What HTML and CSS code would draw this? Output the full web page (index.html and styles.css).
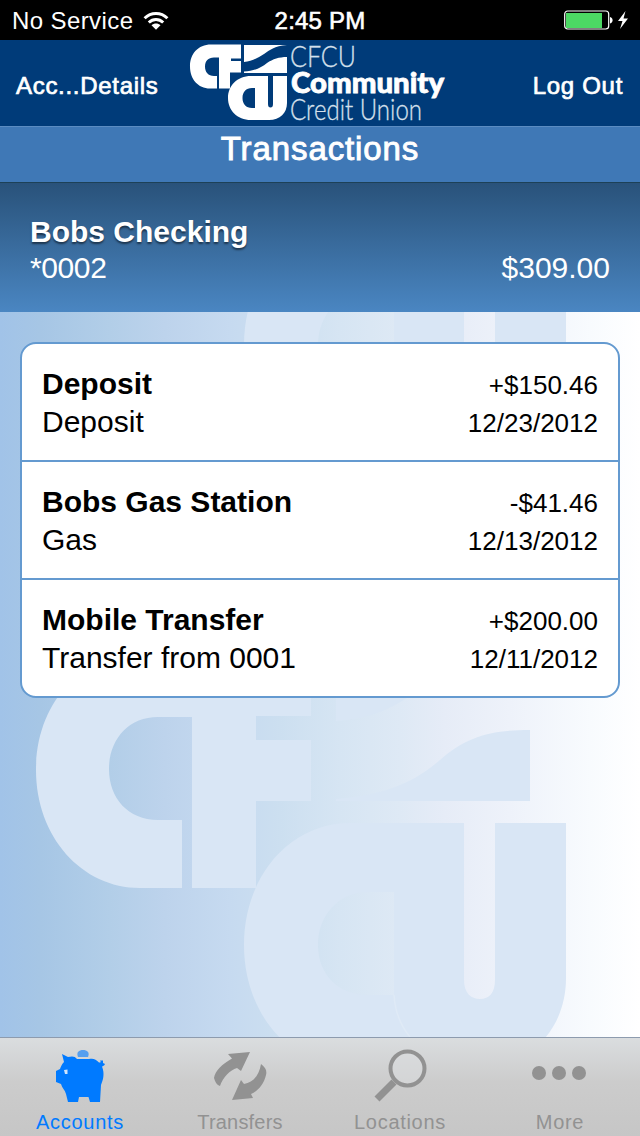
FILE: index.html
```html
<!DOCTYPE html>
<html lang="en">
<head>
    <meta charset="UTF-8">
    <meta name="viewport" content="width=device-width, initial-scale=1.0">
    <title>Transactions</title>
    <link rel="stylesheet" href="styles.css">
</head>
<body>

<!-- CFCU mark used by the page background -->
<svg class="defs" width="0" height="0">
    <symbol id="mark" viewBox="36 652 531 415" preserveAspectRatio="none">
        <path d="M311 652H144C82 652 36 703 36 770S82 888 140 888H182V820H158C128 820 109 798 109 769S128 717 158 717H192V888H256V801H311V740H256V716H311Z"/>
        <path d="M336 652H530C465 652 440 675 410 696C388 711 364 720 336 721Z"/>
        <path d="M336 801V799C382 795 411 785 440 760C467 736 492 730 530 730V801Z"/>
        <path d="M464 823H350C290 823 244 876 244 945S290 1067 350 1067H480C529 1067 566 1030 566 978V823H495V980C495 993 489 999 480 999S464 993 464 980ZM394 892V995H368C338 995 318 974 318 945S338 892 368 892Z" fill-rule="evenodd"/>
    </symbol>
</svg>

<div class="status-bar">
    <div class="carrier">
        <span class="carrier-name">No Service</span>
        <svg class="wifi" width="26" height="20" viewBox="0 0 26 20">
            <path d="M1.6 7.2C8 .9 18 .9 24.4 7.2" fill="none" stroke="#fff" stroke-width="3"/>
            <path d="M5.8 11.5C10 7.5 16 7.5 20.2 11.5" fill="none" stroke="#fff" stroke-width="3"/>
            <path d="M8.5 14.3C11 12 15 12 17.5 14.3L13 18.8Z" fill="#fff"/>
        </svg>
    </div>
    <span class="clock">2:45 PM</span>
    <svg class="battery" width="66" height="20" viewBox="0 0 66 20">
        <rect x=".7" y="1" width="44" height="18" rx="3" fill="none" stroke="#fff" stroke-width="1.2"/>
        <rect x="2" y="3" width="36" height="15" fill="#4cd964"/>
        <path d="M46 7C49.5 7.5 49.5 13 46 13.5Z" fill="#fff"/>
        <path d="M61.5 1L54 11H58.5L56 19L64 8.500H59.5Z" fill="#fff"/>
    </svg>
</div>

<div class="header">
    <a class="header-link" id="back">Acc...Details</a>
    <svg class="logo" width="256" height="82" viewBox="0 0 256 82">
        <g fill="#fff">
            <path d="M52 2.500H22C9 2.500 1 12 1 24.500S9 46.500 21 46.500H28V34H25C19 34 16 30 16 24.500S19 15.500 25 15.500H30V46.500H41V30.500H52V19H42V16.500H52Z"/>
            <path d="M55 3H98C85 4 81 8 75 12C69 16 63 19 55 20Z"/>
            <path d="M55 31V29.500C65 29 72 26 78 21C84 17 90 15 98 15V31Z"/>
            <path d="M79 34H62C48 34 39 44 39 56S48 78 62 78H80C91 78 98 71 98 61V34H84V62Q84 65.500 81.500 65.500T79 62ZM66 46V66H63C57 66 53.500 62 53.500 56S57 46 63 46Z" fill-rule="evenodd"/>
        </g>
        <text class="logo-light" x="101" y="25" textLength="66" lengthAdjust="spacingAndGlyphs">CFCU</text>
        <text class="logo-bold" x="102" y="51" textLength="153" lengthAdjust="spacingAndGlyphs">Community</text>
        <text class="logo-light" x="101" y="77.500" textLength="132" lengthAdjust="spacingAndGlyphs">Credit Union</text>
    </svg>
    <a class="header-link" id="logout">Log Out</a>
</div>

<div class="page-title"><span>Transactions</span></div>

<div class="account">
    <div class="account-name"><span>Bobs Checking</span></div>
    <div class="account-row">
        <span class="account-number">*0002</span>
        <span>$309.00</span>
    </div>
</div>

<div class="main-content">
    <svg class="watermark" width="640" height="725" viewBox="0 312 640 725">
        <use href="#mark" x="36" y="52" width="531" height="415"/>
        <use href="#mark" x="36" y="652" width="531" height="415"/>
        <path d="M394 995C395 1012 401 1026 410 1037" fill="none" stroke="#dfeaf6" stroke-width="1.5"/>
    </svg>
    <ul class="transaction-list">
        <li>
            <div class="line"><b>Deposit</b><span class="amount">+$150.46</span></div>
            <div class="line"><span>Deposit</span><span class="amount">12/23/2012</span></div>
        </li>
        <li>
            <div class="line"><b>Bobs Gas Station</b><span class="amount">-$41.46</span></div>
            <div class="line"><span>Gas</span><span class="amount">12/13/2012</span></div>
        </li>
        <li>
            <div class="line"><b>Mobile Transfer</b><span class="amount">+$200.00</span></div>
            <div class="line"><span>Transfer from 0001</span><span class="amount">12/11/2012</span></div>
        </li>
    </ul>
</div>

<div class="tab-bar">
    <a class="tab active">
        <svg width="60" height="60" viewBox="0 0 60 60">
            <path d="M28 13C26 8 29 6 33 6S40 8 38 13Z" opacity=".6"/>
            <path d="M12 10L18 13C22 12 25 12 27 15H39C43 14 46 15 49 18.500C51 19 51 17.500 50 16.500L53 16.500V19L55 20C54 22 53 22 52 22.500C55 30 53 36 51 41L50 58H40L38.500 53H29L28 58H18L16 50C15 46 12 44 11 40L6 38V27L10 25C11 22 12 20 14 18Z"/>
            <path d="M14 26L17.500 25.500V30H15Z" fill="#d0e4fb"/>
        </svg>
        <span class="tab-label">Accounts</span>
    </a>
    <a class="tab">
        <svg width="60" height="60" viewBox="0 0 60 60">
            <path d="M40 8L18 10L22 14.500C12 20 5 27 4 34C5 38 7 41 10 42C13 33 20 26 27 24L31 27Z"/>
            <path d="M51 20C56 24 57 27 56 31C54 40 48 47 41 50L43 54L22 56L31 36L34 40C43 38 49 32 51 20Z"/>
        </svg>
        <span class="tab-label narrow">Transfers</span>
    </a>
    <a class="tab">
        <svg width="60" height="60" viewBox="0 0 60 60">
            <circle cx="37.500" cy="24.500" r="17" fill="#dcdddf" fill-opacity=".5" stroke="#929292" stroke-width="4"/>
            <path d="M24 38L7 55" stroke="#929292" stroke-width="7"/>
        </svg>
        <span class="tab-label">Locations</span>
    </a>
    <a class="tab">
        <svg width="60" height="60" viewBox="0 0 60 60">
            <circle cx="9" cy="29" r="7"/>
            <circle cx="29" cy="29" r="7"/>
            <circle cx="49" cy="29" r="7"/>
        </svg>
        <span class="tab-label">More</span>
    </a>
</div>

</body>
</html>
```
FILE: styles.css
```css
body {
    margin: 0;
    width: 640px;
    height: 1136px;
    overflow: hidden;
    display: flex;
    flex-direction: column;
    font-family: "Liberation Sans", Arial, sans-serif;
    color: #000;
}
.defs {
    position: absolute;
}
.status-bar {
    height: 40px;
    background-color: #000;
    color: #fff;
    font-size: 24px;
    display: grid;
    grid-template-columns: 1fr auto 1fr;
    align-items: center;
    padding: 0 10px 0 12px;
}
.carrier {
    display: flex;
    align-items: center;
    gap: 10px;
    padding-top: 1px;
}
.carrier-name {
    letter-spacing: 0.4px;
}
.clock {
    padding-top: 2px;
    margin-left: -2px;
    letter-spacing: 0.2px;
    -webkit-text-stroke: 0.6px #fff;
}
.battery {
    justify-self: end;
}
.header {
    height: 86px;
    background-color: #003b79;
    color: #fff;
    display: grid;
    grid-template-columns: 173px 256px 1fr;
    align-items: center;
    padding: 0 18px 0 16px;
}
.header-link {
    font-size: 24px;
    padding-top: 6px;
    letter-spacing: 0.7px;
    -webkit-text-stroke: 0.7px #fff;
}
#logout {
    text-align: right;
    margin-right: -1px;
}
.logo {
    overflow: visible;
}
.logo-light {
    font-family: Lato, sans-serif;
    font-weight: 300;
    font-size: 30px;
    fill: #d5e0ec;
    stroke: #d5e0ec;
    stroke-width: 0.3px;
}
.logo-bold {
    font-family: Lato, sans-serif;
    font-weight: 900;
    font-size: 29px;
    fill: #fff;
    stroke: #fff;
    stroke-width: 0.8px;
}
.page-title {
    height: 56px;
    box-sizing: border-box;
    border-top: 1px solid #5b8cc2;
    background-color: #3f78b6;
    color: #fff;
    font-size: 33px;
    line-height: 43px;
    letter-spacing: 0.9px;
    text-align: center;
    -webkit-text-stroke: 0.9px #fff;
}
.account {
    height: 130px;
    box-sizing: border-box;
    border-top: 1px solid #1d4157;
    padding: 31px 30px 0;
    background-image: linear-gradient(#29527a, #4a86c2);
    color: #fff;
    font-size: 30px;
    line-height: 36px;
}
.account-name {
    font-weight: bold;
    text-shadow: 0 2px 2px rgba(0, 0, 0, 0.5);
}
.account-row {
    display: flex;
    justify-content: space-between;
}
.account-number {
    letter-spacing: -0.4px;
}
.main-content {
    height: 725px;
    box-sizing: border-box;
    padding: 30px 20px 0;
    position: relative;
    background-image: linear-gradient(to right, #a1c3e8 0, #a6c6e5 40px, #b2cee8 110px, #bdd3ec 165px, #c6daf0 230px, #ccdff0 280px, #d6e5f3 340px, #dee9f5 400px, #e6ecf7 445px, #eef2fa 510px, #f8fbfe 590px, #fff 640px);
}
.watermark {
    position: absolute;
    top: 0;
    left: 0;
    fill: #d9e6f5;
}
.transaction-list {
    position: relative;
    list-style-type: none;
    margin: 0;
    padding: 0;
    border: 2px solid #649ad0;
    border-radius: 16px;
    background-color: #fff;
    font-size: 30px;
    line-height: 38px;
}
.transaction-list li {
    height: 116px;
    box-sizing: border-box;
    padding: 21px 20px 0;
}
.transaction-list li + li {
    height: 118px;
    border-top: 2px solid #649ad0;
}
.line {
    display: flex;
    justify-content: space-between;
    align-items: baseline;
    height: 38px;
}
.amount {
    font-size: 26px;
}
.tab-bar {
    height: 99px;
    box-sizing: border-box;
    border-top: 1px solid #8d9bae;
    background-image: linear-gradient(#dadddf, #cccccc 45%, #c6c6c6);
    display: grid;
    grid-template-columns: repeat(4, 160px);
}
.tab {
    display: flex;
    flex-direction: column;
    align-items: center;
    padding-top: 6px;
    font-size: 20px;
    line-height: 36px;
    color: #929292;
    fill: #929292;
}
.tab.active {
    color: #007aff;
    fill: #007aff;
}
.tab-label {
    letter-spacing: 0.7px;
}
.tab-label.narrow {
    letter-spacing: 0.2px;
}
```
